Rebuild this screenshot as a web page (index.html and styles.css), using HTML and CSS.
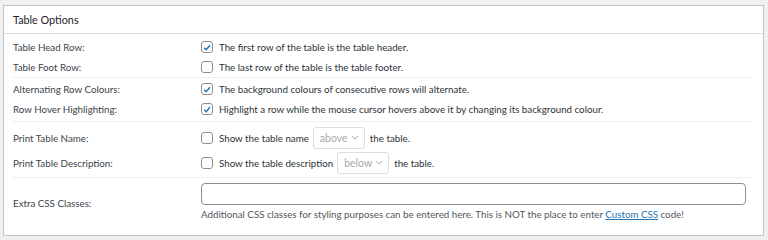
FILE: index.html
```html
<!DOCTYPE html>
<html>
<head>
<meta charset="utf-8">
<link rel="stylesheet" href="styles.css">
</head>
<body>
<div class="panel">
  <div class="panel-head">Table Options</div>
  <div class="panel-body">
    <div class="group g1">
      <div class="row"><div class="label">Table Head Row:</div><div class="field"><span class="cb checked"><svg viewBox="0 0 12 12" width="11" height="11"><path d="M2.6 6.2 L5 8.6 L9.6 3.2" fill="none" stroke="#2271b1" stroke-width="1.7"/></svg></span>The first row of the table is the table header.</div></div>
      <div class="row"><div class="label">Table Foot Row:</div><div class="field"><span class="cb"></span>The last row of the table is the table footer.</div></div>
    </div>
    <div class="group g2">
      <div class="row"><div class="label">Alternating Row Colours:</div><div class="field"><span class="cb checked"><svg viewBox="0 0 12 12" width="11" height="11"><path d="M2.6 6.2 L5 8.6 L9.6 3.2" fill="none" stroke="#2271b1" stroke-width="1.7"/></svg></span>The background colours of consecutive rows will alternate.</div></div>
      <div class="row"><div class="label">Row Hover Highlighting:</div><div class="field"><span class="cb checked"><svg viewBox="0 0 12 12" width="11" height="11"><path d="M2.6 6.2 L5 8.6 L9.6 3.2" fill="none" stroke="#2271b1" stroke-width="1.7"/></svg></span>Highlight a row while the mouse cursor hovers above it by changing its background colour.</div></div>
    </div>
    <div class="group g3">
      <div class="row tall"><div class="label">Print Table Name:</div><div class="field"><span class="cb"></span>Show the table name<span class="select">above<svg viewBox="0 0 10 6" width="8" height="5"><path d="M1 1 L5 5 L9 1" fill="none" stroke="#a7aaad" stroke-width="1.2"/></svg></span>the table.</div></div>
      <div class="row tall"><div class="label">Print Table Description:</div><div class="field"><span class="cb"></span>Show the table description<span class="select">below<svg viewBox="0 0 10 6" width="8" height="5"><path d="M1 1 L5 5 L9 1" fill="none" stroke="#a7aaad" stroke-width="1.2"/></svg></span>the table.</div></div>
    </div>
    <div class="group g4">
      <div class="row extra"><div class="label">Extra CSS Classes:</div><div class="field col"><div class="input"></div><div class="help">Additional CSS classes for styling purposes can be entered here. This is NOT the place to enter <a class="link">Custom CSS</a> code!</div></div></div>
    </div>
  </div>
</div>
</body>
</html>
```
FILE: styles.css
```css
* { box-sizing: border-box; }
html, body { margin: 0; padding: 0; }
body {
  background: #f0f0f1;
  padding: 5px 4px 0 3px;
  width: 768px;
  height: 240px;
  overflow: hidden;
  font-family: Lato, "Open Sans", sans-serif;
  font-size: 9.75px;
  color: #3c434a;
}
.panel {
  background: #fff;
  border: 1px solid #c3c4c7;
  height: 231px;
}
.panel-head {
  height: 28px;
  line-height: 27px;
  border-bottom: 1px solid #dcdcde;
  padding-left: 9px;
  font-size: 10.8px;
  color: #1d2327;
}
.panel-body {
  padding: 0 11px 0 8px;
}
.group {
  border-bottom: 1px solid #f0f0f1;
}
.group.g4 { border-bottom: none; }
.g1 { padding: 3px 0 0; }
.g2 { padding: 1px 0 2px; }
.g3 { padding: 3px 0 2px; }
.g4 { padding: 5px 0 0; }
.row {
  display: flex;
  align-items: center;
  height: 20px;
}
.row.tall { height: 25px; }
.row.extra { height: auto; align-items: center; padding-bottom: 10px; }
.label {
  width: 189px;
  padding-left: 1px;
  flex: none;
}
.field {
  display: flex;
  align-items: center;
  color: #2c3338;
}
.field.col {
  flex-direction: column;
  align-items: stretch;
  flex: 1;
  padding-right: 6px;
}
.cb {
  width: 12px;
  height: 12px;
  border: 1px solid #8c8f94;
  border-radius: 3px;
  margin-right: 6px;
  display: flex;
  align-items: center;
  justify-content: center;
  flex: none;
}
.select {
  display: inline-flex;
  align-items: center;
  justify-content: space-between;
  height: 22px;
  width: 52px;
  border: 1px solid #dcdcde;
  border-radius: 3px;
  color: #a7aaad;
  padding: 0 5px 0 6px;
  margin: 0 5px 0 4px;
  font-size: 10.5px;
}
.input {
  height: 22px;
  border: 1px solid #8c8f94;
  border-radius: 4px;
}
.help {
  margin-top: 1px;
  line-height: 16px;
  color: #50575e;
}
.link {
  color: #2271b1;
  text-decoration: underline;
}
```
